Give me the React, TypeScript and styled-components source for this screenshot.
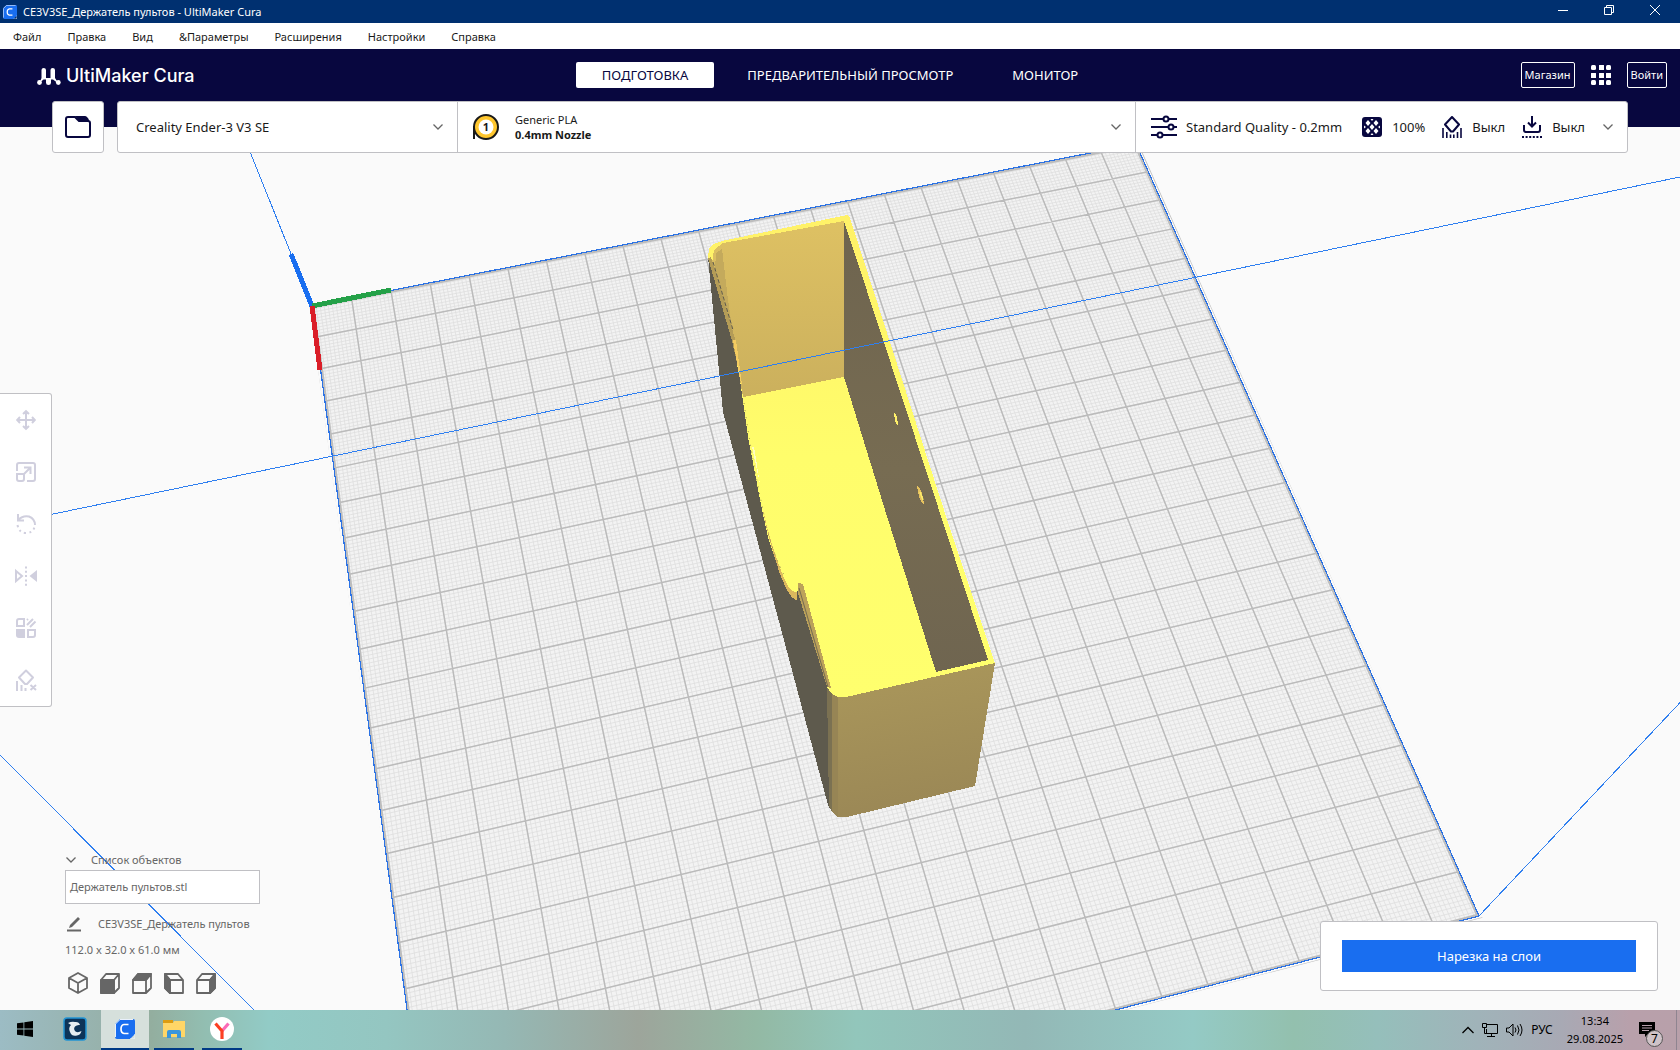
import React from "react";
import styled, { createGlobalStyle } from "styled-components";

const NAVY = "#08073f";
const LINE = "#c0c0c4";
const BLUE = "#196ef0";
const GREY = "#666666";
const MUTED = "#d0cfde";

const Global = createGlobalStyle`
  * { box-sizing: border-box; }
  html, body { margin: 0; height: 100%; }
  body { font-family: "Noto Sans", "Open Sans", sans-serif; font-size: 11px; line-height: 16px; color: #191919; overflow: hidden; }
  button, input { font: inherit; color: inherit; margin: 0; padding: 0; border: 0; background: none; }
  button { cursor: pointer; }
  svg { display: block; flex: none; }
`;

const Window = styled.div`
  display: flex;
  flex-direction: column;
  height: 100vh;
`;

const TitleBar = styled.header`
  display: flex;
  align-items: center;
  height: 23px;
  padding: 0 2px 0 3px;
  background: #003070;
  color: #fff;
`;

const WindowTitle = styled.h1`
  flex: 1;
  margin: 0 0 0 6px;
  font-size: 11px;
  font-weight: 400;
`;

const WindowButton = styled.button`
  display: grid;
  place-items: center;
  width: 46px;
  height: 23px;
  padding-bottom: 3px;
`;

const MenuBar = styled.nav`
  display: flex;
  height: 26px;
  background: #fff;
`;

const MenuItem = styled.button`
  padding: 2px 13px 0;
`;

const Workspace = styled.div`
  position: relative;
  isolation: isolate;
  flex: 1;
  min-height: 0;
  display: flex;
  flex-direction: column;
  background: linear-gradient(${NAVY} 78px, #fafafa 78px);
`;

const Scene = styled.svg`
  position: absolute;
  inset: 0;
  z-index: -1;
  width: 100%;
  height: 100%;
`;

const Header = styled.div`
  display: grid;
  grid-template-columns: 1fr auto 1fr;
  align-items: center;
  height: 52px;
  color: #fff;
`;

const Brand = styled.div`
  display: flex;
  align-items: center;
  gap: 5px;
  padding: 2px 0 0 37px;
  font-family: Inter, "Liberation Sans", sans-serif;
  font-size: 18px;
  font-weight: 500;
  line-height: 24px;
`;

const Tabs = styled.nav`
  display: flex;
  gap: 7px;
`;

const Tab = styled.button<{ $active?: boolean }>`
  height: 26px;
  padding: 0 26px;
  border-radius: 2px;
  font-size: 13px;
  background: ${(p) => (p.$active ? "#fff" : "transparent")};
  color: ${(p) => (p.$active ? NAVY : "#fff")};
`;

const Account = styled.div`
  display: flex;
  justify-content: flex-end;
  align-items: center;
  gap: 16px;
  padding-right: 13px;
`;

const OutlineButton = styled.button`
  height: 26px;
  padding: 0 3px;
  border: 1px solid #fff;
  border-radius: 2px;
`;

const IconButton = styled.button`
  display: grid;
  place-items: center;
`;

const Toolbar = styled.div`
  display: flex;
  gap: 13px;
  height: 52px;
  margin: 0 52px;
`;

const OpenButton = styled.button`
  display: grid;
  place-items: center;
  width: 52px;
  border: 1px solid ${LINE};
  border-radius: 3px;
  background: #fff;
`;

const Selectors = styled.div`
  flex: 1;
  display: grid;
  grid-template-columns: minmax(0, 339fr) minmax(0, 678fr) minmax(0, 492fr);
  border: 1px solid ${LINE};
  border-radius: 3px;
  background: #fff;
`;

const Selector = styled.button<{ $pad: number }>`
  display: flex;
  align-items: center;
  padding: 0 13px 0 ${(p) => p.$pad}px;
  font-size: 13px;
  text-align: left;
  white-space: nowrap;
  & + & { border-left: 1px solid ${LINE}; }
`;

const Grow = styled.span`
  flex: 1;
`;

const Material = styled.span`
  flex: 1;
  display: grid;
  padding-left: 15px;
  font-size: 11px;
  line-height: 15px;
`;

const Setting = styled.span`
  display: flex;
  align-items: center;
  gap: 10px;
  margin-right: 17px;
`;

const Profile = styled(Setting)`
  flex: 1;
  gap: 9px;
`;

const Middle = styled.div`
  flex: 1;
  display: flex;
  align-items: center;
  padding-top: 96px;
`;

const Tools = styled.div`
  display: flex;
  flex-direction: column;
  width: 52px;
  border: 1px solid ${LINE};
  border-left: 0;
  border-radius: 0 3px 3px 0;
  background: #fff;
`;

const Tool = styled.button`
  display: grid;
  place-items: center;
  height: 52px;
`;

const Bottom = styled.div`
  display: flex;
  justify-content: space-between;
  align-items: flex-end;
  padding: 0 22px 16px 65px;
`;

const Objects = styled.section`
  display: flex;
  flex-direction: column;
  width: 195px;
  color: ${GREY};
`;

const ObjectsToggle = styled.button`
  display: flex;
  align-items: center;
  gap: 14px;
  height: 20px;
`;

const ObjectItem = styled.button`
  height: 34px;
  padding: 0 4px;
  border: 1px solid ${LINE};
  background: #fff;
  text-align: left;
`;

const JobName = styled.label`
  display: flex;
  align-items: center;
  gap: 16px;
  height: 40px;
  padding-left: 1px;
  input { flex: 1; min-width: 0; outline: 0; }
`;

const Dimensions = styled.p`
  margin: 0;
  height: 28px;
  line-height: 12px;
`;

const Views = styled.div`
  display: flex;
  gap: 10px;
  padding: 0 2px;
`;

const SlicePanel = styled.section`
  width: 338px;
  margin-bottom: 3px;
  padding: 18px 21px;
  border: 1px solid ${LINE};
  border-radius: 3px;
  background: #fff;
`;

const SliceButton = styled.button`
  width: 100%;
  height: 32px;
  background: ${BLUE};
  color: #fff;
  font-size: 13px;
`;

const Taskbar = styled.footer`
  display: flex;
  align-items: center;
  height: 40px;
  background: linear-gradient(90deg, #9cbcc4 0, #97b2ac 6%, #93ae9f 9%, #92bdb0 12%, #92cbc6 16%, #94c6c1 23%, #95b8b4 30%, #9da59b 38%, #93b9a4 45%, #92c6bb 51%, #93b8b6 61%, #94cac5 71%, #93c0ae 77%, #95bfbb 82%, #a0b3b9 88%, #a8a9b4 93%, #b8a0ab 97%, #b8a0aa 100%);
`;

const TaskApp = styled.button<{ $state?: "open" | "active" }>`
  display: grid;
  place-items: center;
  width: ${(p) => (p.$state === "open" ? 40 : 48)}px;
  height: 40px;
  margin: 0 ${(p) => (p.$state === "open" ? 4 : 1)}px;
  border-bottom: 2px solid ${(p) => (p.$state ? "#003a85" : "transparent")};
  background: ${(p) => (p.$state === "active" ? "#d6e0dc" : "transparent")};
`;

const Tray = styled.div`
  flex: 1;
  display: flex;
  justify-content: flex-end;
  align-items: center;
  gap: 8px;
  height: 100%;
  color: #000;
`;

const Language = styled.button`
  font-size: 12px;
`;

const Clock = styled.time`
  display: grid;
  padding-left: 6px;
  line-height: 18px;
  text-align: center;
`;

const Notices = styled.button`
  position: relative;
  margin: 0 3px 0 8px;
  width: 26px;
  height: 26px;
`;

const Count = styled.span`
  position: absolute;
  right: 2px;
  bottom: -4px;
  width: 17px;
  height: 17px;
  border: 1px solid #555;
  border-radius: 50%;
  background: #cfc3c8;
  font-size: 12px;
  line-height: 15px;
`;

const ShowDesktop = styled.button`
  width: 4px;
  height: 100%;
  border-left: 1px solid #8f8490;
`;

/* ---------- 3D view ---------- */

type Pt = [number, number];
const CELLS = 22;
const CORNERS: Pt[] = [[312, 306], [1136, 144], [1479, 916], [431, 1187]];

// Projective map of the unit square onto the four corners of the build plate.
function plate(u: number, v: number): Pt {
  const [[x0, y0], [x1, y1], [x2, y2], [x3, y3]] = CORNERS;
  const dx1 = x1 - x2, dx2 = x3 - x2, sx = x0 - x1 + x2 - x3;
  const dy1 = y1 - y2, dy2 = y3 - y2, sy = y0 - y1 + y2 - y3;
  const det = dx1 * dy2 - dx2 * dy1;
  const g = (sx * dy2 - dx2 * sy) / det;
  const h = (dx1 * sy - sx * dy1) / det;
  const w = g * u + h * v + 1;
  return [
    ((x1 - x0 + g * x1) * u + (x3 - x0 + h * x3) * v + x0) / w,
    ((y1 - y0 + g * y1) * u + (y3 - y0 + h * y3) * v + y0) / w,
  ];
}

const seg = (a: Pt, b: Pt) => `M${a[0].toFixed(2)} ${a[1].toFixed(2)}L${b[0].toFixed(2)} ${b[1].toFixed(2)}`;

function gridPath(count: number) {
  let d = "";
  for (let i = 0; i <= count; i++) {
    const t = i / count;
    d += seg(plate(t, 0), plate(t, 1)) + seg(plate(0, t), plate(1, t));
  }
  return d;
}

const MINOR = gridPath(CELLS * 10);
const MAJOR = gridPath(CELLS);
const OUTLINE = CORNERS.map((p) => p.join(",")).join(" ");

const BuildView = () => (
  <Scene viewBox="0 49 1680 961" preserveAspectRatio="xMidYMid slice" role="img" aria-label="3D">
    <defs>
      <linearGradient id="back" x1="0" y1="0" x2="0" y2="1">
        <stop offset="0" stopColor="#dec163" /><stop offset="1" stopColor="#cbb05d" />
      </linearGradient>
      <linearGradient id="front" x1="0" y1="0" x2="0.2" y2="1">
        <stop offset="0" stopColor="#ab985b" /><stop offset="1" stopColor="#9b8856" />
      </linearGradient>
      <linearGradient id="floor" x1="0" y1="0" x2="0" y2="1">
        <stop offset="0" stopColor="#fff168" /><stop offset="0.5" stopColor="#fffd6b" /><stop offset="1" stopColor="#ffff6e" />
      </linearGradient>
      <linearGradient id="side" x1="0" y1="0" x2="0" y2="1">
        <stop offset="0" stopColor="#6e644f" /><stop offset="0.55" stopColor="#776c52" /><stop offset="1" stopColor="#6f6550" />
      </linearGradient>
    </defs>
    <polygon points={OUTLINE} fill="#f3f3f3" />
    <path d={MINOR} stroke="#dedede" strokeWidth="0.8" fill="none" />
    <path d={MAJOR} stroke="#bbbbbb" strokeWidth="1.5" fill="none" />
    <polygon points={OUTLINE} fill="none" stroke="#bdbdbd" strokeWidth="5" />
    <path d="M309 303L1136 140L1483 917L428 1191Z M312 306L431 1187L1479 916L1136 144Z" fill="#fafafa" />
    <polygon points={OUTLINE} fill="none" stroke="#2b72e4" strokeWidth="1.2" shapeRendering="crispEdges" />

    <g shapeRendering="crispEdges">
      <path d="M708 257L722 241L838 697L846 817L837 817L832 812L828 805L723 412Z" fill="#5e5a4d" />
      <path d="M827 687L846 697L995 663L975 786L847 817L837 817L832 812L829 806Z" fill="url(#front)" />
      <path d="M827 687L832 693L832 812L829 806Z" fill="#7b7152" />
      <path d="M832 693L838 697L838 817L832 812Z" fill="#978555" />
      <path d="M708 258L709 248L713 244L722 241L847 215L850 218L944 510L995 663L846 697L838 697L832 694L827 687L803 594L798 583L797 599L792 597L780 573L768 537L762 510L748 437L740 380L732 337Z" fill="url(#floor)" />
      <path d="M714 250L723 243L844 221L844 377L743 397L733 340L712 264Z" fill="url(#back)" />
      <path d="M844 221L939 510L988 660L936 672L885 510L844 377Z" fill="url(#side)" />
      <path d="M716 253L722 249L728 300L734 340L715 270Z" fill="#c4aa5c" />
      <path d="M708 258L711 257L735 339L741 380L732 341Z" fill="#b49c57" />
      <path d="M733 340L736 340L742 385L740 380Z" fill="#f5cc61" />
      <path d="M762 505C768 535 775 555 782 573C787 587 793 594 797 592L797 600Q790 600 780 574Q768 540 762 505Z" fill="#dcb85d" />
      <path d="M798 583L803 584L831 688L827 687L798 593Z" fill="#bca25a" />
      <path d="M752 447L754 447L760 484Z" fill="#fffdc0" />
      <path d="M894 413Q897 412 898 426Q895 424 894 413Z" fill="#fff06a" />
      <path d="M917 486Q922 487 924 505Q919 502 917 486Z" fill="#e6c25f" />
    </g>
    <path d="M713 262L733 330" stroke="#5e5a4d" strokeDasharray="4 2" />
    <path d="M799 588L828 687" stroke="#756b51" strokeWidth="1" />
    <path d="M744 403Q752 460 763 510Q769 545 784 575" stroke="#8b7a50" strokeWidth="1" strokeDasharray="1 6" fill="none" />
    <path d="M920 492L923 500" stroke="#fff06a" strokeWidth="1.5" />

    <g shapeRendering="crispEdges" fill="none">
      <path d="M240 127L312 306M0 525L1680 177M0 755L264 1020M1479 916L1690 692" stroke="#2f7ff0" />
      <path d="M291 254L312 306" stroke={BLUE} strokeWidth="5" />
      <path d="M312 306L391 290" stroke="#24a148" strokeWidth="5" />
      <path d="M312 306L320 370" stroke="#da1e28" strokeWidth="5" />
    </g>
  </Scene>
);

/* ---------- icons ---------- */

const Chevron = () => (
  <svg width="12" height="12" viewBox="0 0 12 12" fill="none" stroke="#666" strokeWidth="1.3"><path d="M1.5 3.5L6 8L10.500 3.500" /></svg>
);

const CuraIcon = ({ size }: { size: number }) => (
  <svg width={size} height={size} viewBox="0 0 20 20">
    <path d="M5 0H18Q20 0 20 2V15L15 20H2Q0 20 0 18V5Z" fill={BLUE} />
    <path d="M20 15V18Q20 20 18 20H15M.5 18V5L5 .5H18" fill="none" stroke="#e8f0fc" />
    <path d="M13.500 5.500H9Q6 6 6 10T9 14.500H13.500" fill="none" stroke="#fff" strokeWidth="1.700" />
  </svg>
);

const Logo = () => (
  <svg width="24" height="17" viewBox="0 0 24 17" fill="#fff">
    <path d="M4.500 2Q4.500 0 6.700 0T9 2V10H13.500V2Q13.500 0 15.700 0T18 2V10L20 13V14.500L18 13L16 11.500H14V14.800Q14 17 11.500 17T9 14.800V11.500H6.500L3.500 14V12.500L4.500 10Z" />
    <circle cx="2.500" cy="14.500" r="2.400" /><circle cx="21.300" cy="14.500" r="2.400" />
  </svg>
);

const AppsIcon = () => (
  <svg width="20" height="20" viewBox="0 0 20 20" fill="#fff">
    {[0, 8, 15].map((y) => [0, 8, 15].map((x) => <rect key={`${x}-${y}`} x={x} y={y} width="5" height="5" rx={x !== 8 && y !== 8 ? 1.5 : 0.3} />))}
  </svg>
);

const FolderIcon = () => (
  <svg width="26" height="24" viewBox="0 0 26 24" fill="none" stroke={NAVY} strokeWidth="2">
    <path d="M1 4Q1 2 3 2H10L14 6H23Q25 6 25 8V20Q25 22 23 22H3Q1 22 1 20Z" /><path d="M10 1H20Q22 1 24 5V7H15Z" fill={NAVY} stroke="none" />
  </svg>
);

const SpoolIcon = () => (
  <svg width="28" height="28" viewBox="0 0 28 28">
    <path d="M2 26V13" stroke="#191919" strokeWidth="2" />
    <circle cx="14" cy="14" r="12" fill="#fec62e" stroke="#191919" strokeWidth="2" />
    <circle cx="14" cy="14" r="7.500" fill="#fff" />
    <text x="14" y="18" textAnchor="middle" fontSize="11" fontWeight="700" fill="#191919">1</text>
  </svg>
);

const SlidersIcon = () => (
  <svg width="26" height="24" viewBox="0 0 26 24" fill="none" stroke={NAVY} strokeWidth="2">
    <path d="M0 4H12M18 4H26M0 12H17M23 12H26M0 20H6M12 20H26" /><circle cx="15" cy="4" r="2.500" /><circle cx="20" cy="12" r="2.500" /><circle cx="9" cy="20" r="2.500" />
  </svg>
);

const InfillIcon = () => (
  <svg width="20" height="20" viewBox="0 0 20 20">
    <rect width="20" height="20" rx="3" fill={NAVY} />
    <path d="M6 3L8.500 6L6 9L3.500 6ZM14 3L16.500 6L14 9L11.500 6ZM6 11L8.500 14L6 17L3.500 14ZM14 11L16.500 14L14 17L11.500 14ZM10 7L12.500 10L10 13L7.500 10ZM8.500 2H11.500L10 4ZM8.500 18H11.500L10 16ZM2 8.500V11.500L4 10ZM18 8.500V11.500L16 10Z" fill="#fff" />
  </svg>
);

const SupportIcon = () => (
  <svg width="20" height="22" viewBox="0 0 20 22" fill="none" stroke={NAVY} strokeWidth="2">
    <path d="M10 1L17 8.500L11 15.500H9L3 8.500Z" strokeLinejoin="round" /><path d="M1 12V22M4.800 16V22M8.500 18.500V22M11.800 18.500V22M15.500 16V22M19 12V22" strokeWidth="1.600" />
  </svg>
);

const AdhesionIcon = () => (
  <svg width="20" height="22" viewBox="0 0 20 22" fill="none" stroke={NAVY} strokeWidth="2">
    <path d="M10 0V10M6 6.500L10 10.500L14 6.500M2 9V14Q2 16 4 16H16Q18 16 18 14V9" /><path d="M0 21H20" strokeDasharray="2 1.600" />
  </svg>
);

const toolIcons: { label: string; art: React.ReactNode }[] = [
  { label: "Перемещение", art: <path d="M10 1.500V18.500M1.500 10H18.500M7 4L10 1.200L13 4M7 16L10 18.800L13 16M4 7L1.200 10L4 13M16 7L18.800 10L16 13" /> },
  { label: "Масштаб", art: <path d="M1 9V3Q1 1 3 1H17Q19 1 19 3V17Q19 19 17 19H11M1 12H8V17Q8 19 6 19H3Q1 19 1 17ZM8 12L14 6M8 5.500H14.500V12" /> },
  { label: "Вращение", art: <><path d="M2 0V6.500H8M2 6Q7 1 13 2.500Q19 5 19 11" /><path d="M1.500 11Q3 19 10 19T18.500 13" strokeDasharray="2 3.300" /></> },
  { label: "Отражение", art: <><path d="M0 5L6 10L0 15Z" /><path d="M21 4V16L13.500 10Z" fill={MUTED} stroke="none" /><path d="M10 .5V20" strokeDasharray="2 2.300" /></> },
  { label: "Параметры модели", art: <><path d="M3 1H8V8H1V3Q1 1 3 1ZM12 12H19V17Q19 19 17 19H12ZM11 7L17 1M14 9L19.500 3.500M11 2L12 1" /><path d="M0 11H9V20H3Q0 20 0 17Z" fill={MUTED} stroke="none" /></> },
  { label: "Блокировка поддержки", art: <><path d="M10 .5L17 7.500L11 14H9L3 7.500Z" strokeLinejoin="round" /><path d="M1 11V21M5.500 15V21M9.500 18V21M14.500 15L20 20M20 15L14.500 20" /></> },
];

const views: { label: string; face?: string; flip?: boolean }[] = [
  { label: "3D" },
  { label: "Спереди", face: "M1 7H14V20H1Z" },
  { label: "Сверху", face: "M1 7L6 1H19L14 7Z" },
  { label: "Слева", face: "M14 7L19 1V15L14 20Z", flip: true },
  { label: "Справа", face: "M14 7L19 1V15L14 20Z" },
];

const ViewIcon = ({ face, flip }: { face?: string; flip?: boolean }) => (
  <svg width="22" height="22" viewBox="-1 -1 22 22" fill="none" stroke={GREY} strokeWidth="1.800" strokeLinejoin="round">
    {face ? (
      <g transform={flip ? "translate(20 0) scale(-1 1)" : undefined}>
        <path d="M1 7L6 1H19V15L14 20H1ZM1 7H14V20M14 7L19 1" /><path d={face} fill={GREY} />
      </g>
    ) : <path d="M10 0L19 5V15L10 20L1 15V5ZM1 5L10 10L19 5M10 10V20" />}
  </svg>
);

const PencilIcon = () => (
  <svg width="16" height="16" viewBox="0 0 16 16" fill={GREY}><path d="M3 12L4 9L12 1L14 3L6 11ZM1 13.500H15V15.500H1Z" /></svg>
);

const StartIcon = () => (
  <svg width="16" height="16" viewBox="0 0 16 16"><path d="M0 2.300L6.500 1.400V7.600H0ZM7.300 1.300L16 0V7.600H7.300ZM0 8.400H6.500V14.600L0 13.700ZM7.300 8.400H16V16L7.300 14.700Z" /></svg>
);

const CrealityIcon = () => (
  <svg width="24" height="24" viewBox="0 0 24 24">
    <rect x="1" y="1" width="22" height="22" rx="3" fill="#0d3358" stroke="#2294d4" strokeWidth="1.500" />
    <path d="M17 8Q16 4.500 12 5Q9 4 5 6L8 8Q5 11 7 15Q9 20 14 18.500Q17.500 18 18.500 14Q15 16 12.500 14.500Q10 12 12 9.500Q14 7.500 17 8Z" fill="#e6edf2" />
  </svg>
);

const ExplorerIcon = () => (
  <svg width="22" height="20" viewBox="0 0 22 20">
    <path d="M0 1H10V5H0Z" fill="#dd9c10" /><path d="M0 4H10L11 2H22V18H0Z" fill="#ffd667" /><path d="M4 19V13Q4 11 6 11H16Q18 11 18 13V19H14V15H8V19Z" fill="#3a96dc" />
  </svg>
);

const YandexIcon = () => (
  <svg width="24" height="24" viewBox="0 0 24 24" fill="none" strokeWidth="3.200">
    <circle cx="12" cy="12" r="12" fill="#fff" /><path d="M12 14L18.500 6.500" stroke="#fa6bb7" /><path d="M12 22V14L5.500 6.500" stroke="#fc4023" />
  </svg>
);

const menu = ["Файл", "Правка", "Вид", "&Параметры", "Расширения", "Настройки", "Справка"];

export default function App() {
  return (
    <Window>
      <Global />
      <TitleBar>
        <CuraIcon size={14} />
        <WindowTitle>CE3V3SE_Держатель пультов - UltiMaker Cura</WindowTitle>
        <WindowButton aria-label="Свернуть"><svg width="10" height="10" stroke="#fff"><path d="M0 5.500H10" /></svg></WindowButton>
        <WindowButton aria-label="Развернуть"><svg width="10" height="10" fill="none" stroke="#fff"><path d="M.5 2.500H7.500V9.500H.5ZM2.500 2.500V.5H9.500V7.500H7.500" /></svg></WindowButton>
        <WindowButton aria-label="Закрыть"><svg width="10" height="10" stroke="#fff"><path d="M0 0L10 10M10 0L0 10" /></svg></WindowButton>
      </TitleBar>
      <MenuBar>{menu.map((m) => <MenuItem key={m}>{m}</MenuItem>)}</MenuBar>

      <Workspace>
        <BuildView />
        <Header>
          <Brand><Logo />UltiMaker Cura</Brand>
          <Tabs>
            <Tab $active>ПОДГОТОВКА</Tab>
            <Tab>ПРЕДВАРИТЕЛЬНЫЙ ПРОСМОТР</Tab>
            <Tab>МОНИТОР</Tab>
          </Tabs>
          <Account>
            <OutlineButton>Магазин</OutlineButton>
            <IconButton aria-label="Приложения"><AppsIcon /></IconButton>
            <OutlineButton>Войти</OutlineButton>
          </Account>
        </Header>

        <Toolbar>
          <OpenButton aria-label="Открыть файл"><FolderIcon /></OpenButton>
          <Selectors>
            <Selector $pad={18}><Grow>Creality Ender-3 V3 SE</Grow><Chevron /></Selector>
            <Selector $pad={14}>
              <SpoolIcon />
              <Material><span>Generic PLA</span><b>0.4mm Nozzle</b></Material>
              <Chevron />
            </Selector>
            <Selector $pad={15}>
              <Profile><SlidersIcon />Standard Quality - 0.2mm</Profile>
              <Setting><InfillIcon />100%</Setting>
              <Setting><SupportIcon />Выкл</Setting>
              <Setting><AdhesionIcon />Выкл</Setting>
              <Chevron />
            </Selector>
          </Selectors>
        </Toolbar>

        <Middle>
          <Tools>
            {toolIcons.map((t) => (
              <Tool key={t.label} aria-label={t.label}>
                <svg width="22" height="22" viewBox="-1 -1 22 22" fill="none" stroke={MUTED} strokeWidth="2">{t.art}</svg>
              </Tool>
            ))}
          </Tools>
        </Middle>

        <Bottom>
          <Objects>
            <ObjectsToggle><Chevron />Список объектов</ObjectsToggle>
            <ObjectItem>Держатель пультов.stl</ObjectItem>
            <JobName>
              <PencilIcon />
              <input aria-label="Имя задания" defaultValue="CE3V3SE_Держатель пультов" />
            </JobName>
            <Dimensions>112.0 x 32.0 x 61.0 мм</Dimensions>
            <Views>
              {views.map((v) => <IconButton key={v.label} aria-label={v.label}><ViewIcon face={v.face} flip={v.flip} /></IconButton>)}
            </Views>
          </Objects>
          <SlicePanel><SliceButton>Нарезка на слои</SliceButton></SlicePanel>
        </Bottom>
      </Workspace>

      <Taskbar>
        <TaskApp aria-label="Пуск"><StartIcon /></TaskApp>
        <TaskApp aria-label="Creality Print"><CrealityIcon /></TaskApp>
        <TaskApp aria-label="UltiMaker Cura" $state="active"><CuraIcon size={20} /></TaskApp>
        <TaskApp aria-label="Проводник" $state="open"><ExplorerIcon /></TaskApp>
        <TaskApp aria-label="Яндекс" $state="open"><YandexIcon /></TaskApp>
        <Tray>
          <IconButton aria-label="Скрытые значки"><svg width="12" height="8" fill="none" stroke="#000" strokeWidth="1.300"><path d="M.5 7L6 1.500L11.500 7" /></svg></IconButton>
          <IconButton aria-label="Сеть"><svg width="16" height="14" fill="none" stroke="#000"><path d="M4 1.500H15.500V10.500H4.500V6M.5 .5H4.500V4.500H.5ZM2.500 4V10.500H5M9.500 10V13M5 13.500H13" /></svg></IconButton>
          <IconButton aria-label="Звук"><svg width="17" height="14" fill="none" stroke="#000"><path d="M.5 5H3L7 1V13L3 9H.5ZM9 4.500Q11 7 9 9.500M11.500 2.500Q14.500 7 11.500 11.500M14 1Q18 7 14 13" /></svg></IconButton>
          <Language>РУС</Language>
          <Clock><span>13:34</span><span>29.08.2025</span></Clock>
          <Notices aria-label="Уведомления">
            <svg width="16" height="16" viewBox="0 0 16 16"><path d="M0 0H16V12H9L6 15V12H0Z" /><path d="M3 3.500H13M3 6H13M3 8.500H10" stroke="#b69eab" /></svg>
            <Count>7</Count>
          </Notices>
          <ShowDesktop aria-label="Рабочий стол" />
        </Tray>
      </Taskbar>
    </Window>
  );
}
